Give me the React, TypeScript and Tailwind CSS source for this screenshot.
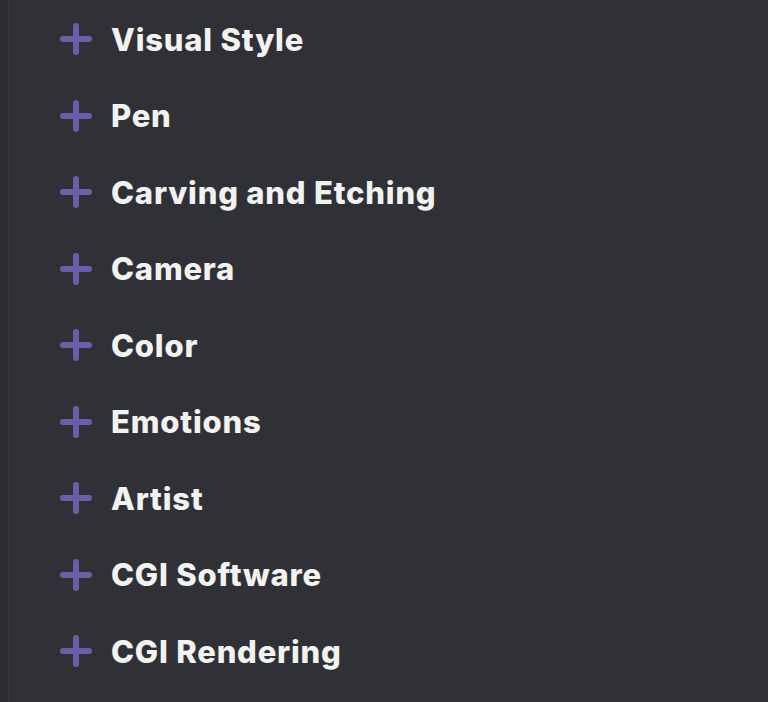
const categories = [
  "Visual Style",
  "Pen",
  "Carving and Etching",
  "Camera",
  "Color",
  "Emotions",
  "Artist",
  "CGI Software",
  "CGI Rendering",
];

const PlusIcon = () => (
  <svg width="32" height="32" viewBox="0 0 32 32" className="shrink-0">
    <path d="M16 3v26M3 16h26" stroke="#6a5fa6" strokeWidth="6" strokeLinecap="round" />
  </svg>
);

export default function App() {
  return (
    <div className="w-[768px] h-[702px] flex bg-[#303137] overflow-hidden">
      <div className="w-[9px] h-full bg-[#2b2c31] border-r border-[#35363c]"></div>
      <div className="flex-1 pl-[51px] pt-[23px] flex flex-col gap-[44.5px]">
        {categories.map((name) => (
          <div key={name} className="flex items-center gap-[19px] h-[32px]">
            <PlusIcon />
            <span
              className="text-[#f2f2f0] text-[31px] font-extrabold leading-none tracking-[0.8px]"
              style={{ fontFamily: "Inter, 'Noto Sans', sans-serif" }}
            >
              {name}
            </span>
          </div>
        ))}
      </div>
    </div>
  );
}
